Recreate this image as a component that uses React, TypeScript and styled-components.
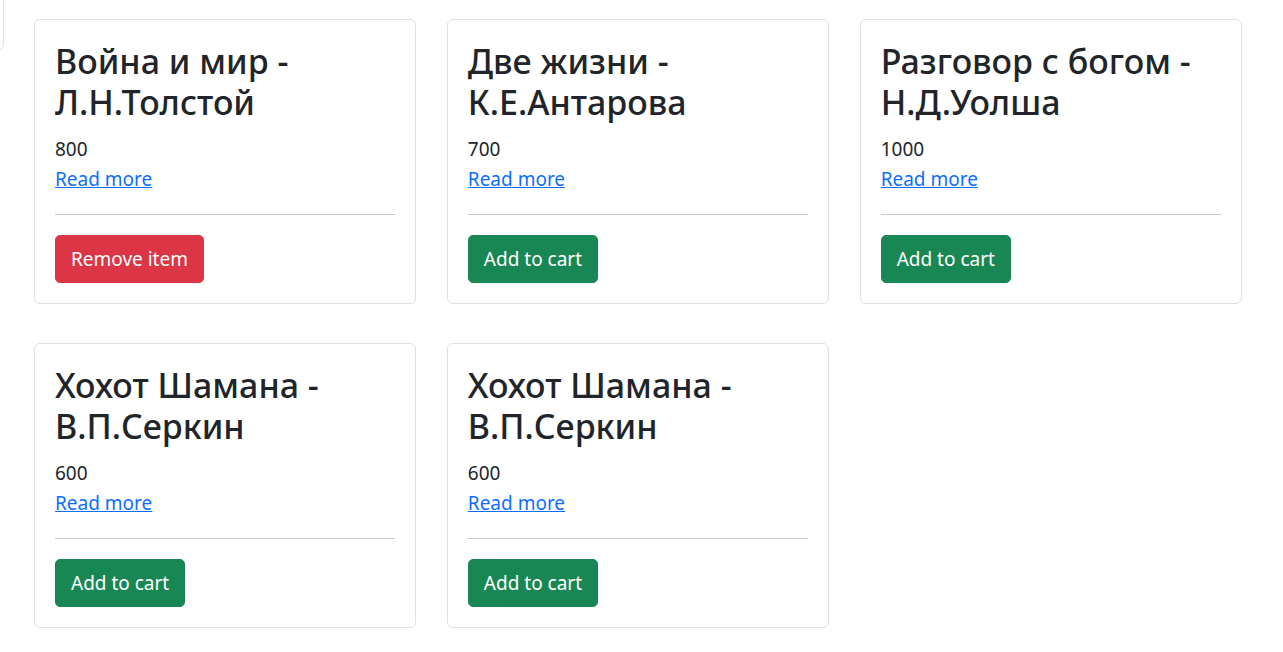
import styled, { createGlobalStyle } from 'styled-components'

type Book = {
  title: string
  author: string
  price: number
  inCart?: boolean
}

const books: Book[] = [
  { title: 'Война и мир', author: 'Л.Н.Толстой', price: 800, inCart: true },
  { title: 'Две жизни', author: 'К.Е.Антарова', price: 700 },
  { title: 'Разговор с богом', author: 'Н.Д.Уолша', price: 1000 },
  { title: 'Хохот Шамана', author: 'В.П.Серкин', price: 600 },
  { title: 'Хохот Шамана', author: 'В.П.Серкин', price: 600 },
]

export default function App() {
  return (
    <>
      <GlobalStyle />
      <SideToggle aria-label="menu" />
      <Grid>
        {books.map((book, i) => (
          <Card key={i}>
            <Title>
              {book.title} - {book.author}
            </Title>
            <Price>{book.price}</Price>
            <MoreLink href="#">Read more</MoreLink>
            <Divider />
            <ActionButton $variant={book.inCart ? 'danger' : 'success'}>
              {book.inCart ? 'Remove item' : 'Add to cart'}
            </ActionButton>
          </Card>
        ))}
      </Grid>
    </>
  )
}

const GlobalStyle = createGlobalStyle`
  body {
    margin: 0;
    background: #fff;
    color: #212529;
    font-family: "Noto Sans", "Open Sans", sans-serif;
    font-size: 19px;
    line-height: 30px;
  }
`

const SideToggle = styled.button`
  position: absolute;
  left: -40px;
  top: -1px;
  width: 44px;
  height: 51px;
  background: #fff;
  border: 1px solid #dee2e6;
  border-radius: 0 0 6px 0;
  padding: 0;
`

const Grid = styled.main`
  display: grid;
  width: 1208px;
  grid-template-columns: repeat(3, 1fr);
  column-gap: 30.5px;
  row-gap: 39px;
  padding: 19px 0 0 34px;
`

const Card = styled.section`
  display: flex;
  flex-direction: column;
  align-items: flex-start;
  padding: 20px;
  border: 1px solid #dfe0e1;
  border-radius: 6px;
  background: #fff;
`

const Title = styled.h3`
  margin: 1px 0 11px;
  font-size: 34px;
  font-weight: 500;
  line-height: 41px;
  color: #212529;
`

const Price = styled.p`
  margin: 0;
`

const MoreLink = styled.a`
  color: #0d6efd;
  text-decoration: underline;
`

const Divider = styled.hr`
  align-self: stretch;
  margin: 20px 0;
  border: 0;
  border-top: 1px solid #c8c9ca;
`

const ActionButton = styled.button<{ $variant: 'danger' | 'success' }>`
  height: 48px;
  padding: 0 15px;
  font-family: inherit;
  font-size: 19px;
  line-height: 30px;
  color: #fff;
  border: 1px solid ${(p) => (p.$variant === 'danger' ? '#dc3545' : '#198754')};
  background: ${(p) => (p.$variant === 'danger' ? '#dc3545' : '#198754')};
  border-radius: 5px;
  cursor: pointer;
`
